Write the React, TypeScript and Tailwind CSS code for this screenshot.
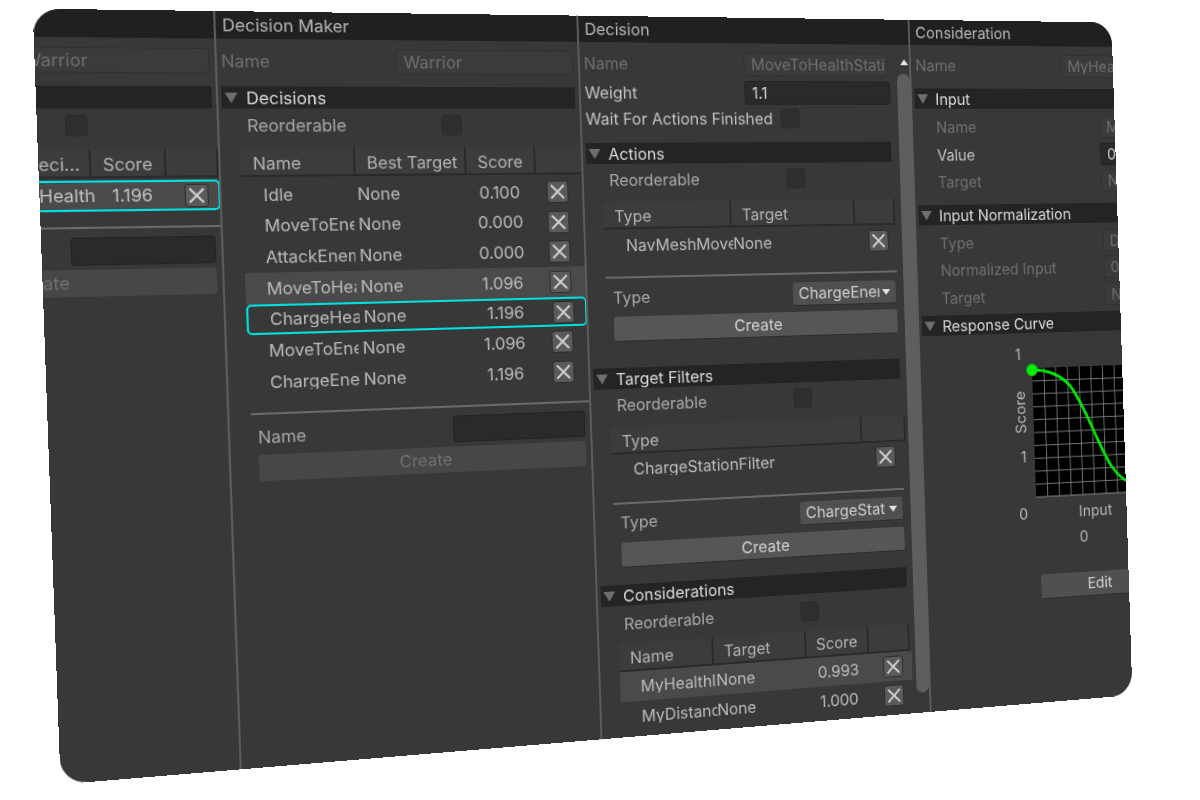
import React from "react";

const W = 1100;
const H = 718;

function quadTransform(): string {
  const [x0, y0, x1, y1, x2, y2, x3, y3] = [32.7, 8.7, 1111.4, 22.4, 1132.3, 695, 60.6, 784.4];
  const sx = x0 - x1 + x2 - x3;
  const sy = y0 - y1 + y2 - y3;
  const dx1 = x1 - x2;
  const dx2 = x3 - x2;
  const dy1 = y1 - y2;
  const dy2 = y3 - y2;
  const det = dx1 * dy2 - dx2 * dy1;
  const g = (sx * dy2 - dx2 * sy) / det;
  const h = (dx1 * sy - sx * dy1) / det;
  const a = x1 - x0 + g * x1;
  const b = x3 - x0 + h * x3;
  const d = y1 - y0 + g * y1;
  const e = y3 - y0 + h * y3;
  return `matrix3d(${a / W},${d / W},0,${g / W},${b / H},${e / H},0,${h / H},0,0,1,0,${x0},${y0},0,1)`;
}

function XBtn() {
  return (
    <div className="w-[22px] h-[22px] rounded-[3px] bg-[#5a5a5a] border border-[#2c2c2c] flex items-center justify-center shrink-0">
      <svg width="16" height="16" viewBox="0 0 16 16">
        <path d="M1.5 1.5 L14.5 14.5 M14.5 1.5 L1.5 14.5" stroke="#d4d4d4" strokeWidth="1.8" />
      </svg>
    </div>
  );
}

function Check() {
  return <div className="w-[20px] h-[20px] rounded-[3px] bg-[#2f2f2f] border border-[#2a2a2a] shrink-0" />;
}

function Tri() {
  return (
    <svg width="12" height="10" viewBox="0 0 12 10" className="ml-[3px] shrink-0">
      <path d="M0 0 H12 L6 10 Z" fill="#6e6e6e" />
    </svg>
  );
}

function Band({ label, cls }: { label: string; cls: string }) {
  return (
    <div className={`h-[21px] bg-[#242424] flex items-center whitespace-nowrap shrink-0 ${cls}`}>
      <Tri />
      <span className="ml-[8px] pt-[2px] text-[#dcdcdc]">{label}</span>
    </div>
  );
}

function Title({ label }: { label: string }) {
  return (
    <div className="h-[26px] bg-[#202020] pl-[8px] flex items-center text-[#b8b8b8] whitespace-nowrap shrink-0">{label}</div>
  );
}

function Input({ text, cls }: { text: string; cls: string }) {
  return (
    <div className={`h-[24px] rounded-[3px] bg-[#3b3b3b] border border-[#313131] pl-[7px] pr-[3px] flex items-center text-[#6f6f6f] shrink-0 ${cls}`}>
      <span className="overflow-hidden whitespace-nowrap">{text}</span>
    </div>
  );
}

function DarkInput({ text, cls }: { text: string; cls: string }) {
  return (
    <div className={`h-[24px] rounded-[3px] bg-[#2a2a2a] border border-[#232323] pl-[7px] flex items-center overflow-hidden whitespace-nowrap text-[#d0d0d0] shrink-0 ${cls}`}>
      {text}
    </div>
  );
}

function CheckRow({ cls }: { cls: string }) {
  return (
    <div className={`h-[24px] flex items-center shrink-0 ${cls}`}>
      <span className="w-[214px] pl-[28px] text-[#a8a8a8]">Reorderable</span>
      <Check />
    </div>
  );
}

function HeadCell({ w, children }: { w: string; children?: React.ReactNode }) {
  return (
    <div className={`h-full border-r-2 border-[#2a2a2a] pt-[3px] flex items-center overflow-hidden whitespace-nowrap text-[#b4b4b4] shrink-0 ${w}`}>
      {children}
    </div>
  );
}

function Line({ cls }: { cls: string }) {
  return <div className={`h-[2px] bg-[#6a6a6a] shrink-0 ${cls}`} />;
}

function ColRule() {
  return <div className="absolute z-10 top-0 bottom-0 right-[-2px] w-[2px] bg-[#5c5c5c]" />;
}

function Dropdown({ text }: { text: string }) {
  return (
    <div className="h-[24px] ml-[189px] w-[112px] rounded-[3px] bg-[#505050] border-b border-[#2c2c2c] flex items-center pl-[6px] pr-[6px] text-[#cfcfcf] shrink-0">
      <span className="overflow-hidden whitespace-nowrap flex-1">{text}</span>
      <svg width="9" height="6" viewBox="0 0 9 6" className="shrink-0 ml-[3px]">
        <path d="M0 0 H9 L4.5 6 Z" fill="#e4e4e4" />
      </svg>
    </div>
  );
}

function TypeRow({ text, cls }: { text: string; cls: string }) {
  return (
    <div className={`h-[24px] flex items-center shrink-0 ${cls}`}>
      <span className="w-0 ml-[28px] mt-[-1px] text-[#a8a8a8]">Type</span>
      <Dropdown text={text} />
    </div>
  );
}

function CreateBtn({ cls }: { cls: string }) {
  return (
    <div className={`h-[25px] ml-[28px] w-[302px] rounded-[3px] bg-[#565656] border-b border-[#2c2c2c] flex items-center justify-center text-[#d2d2d2] shrink-0 ${cls}`}>
      Create
    </div>
  );
}

type DRow = { name: string; score: string; state?: "hover" | "sel" };

const decisionRows: DRow[] = [
  { name: "Idle", score: "0.100" },
  { name: "MoveToEnemy", score: "0.000" },
  { name: "AttackEnemy", score: "0.000" },
  { name: "MoveToHealth", score: "1.096", state: "hover" },
  { name: "ChargeHealth", score: "1.196", state: "sel" },
  { name: "MoveToEnemy", score: "1.096" },
  { name: "ChargeEnemy", score: "1.196" },
];

function rowCls(state?: "hover" | "sel") {
  if (state === "hover") return "bg-[#4a4a4a]";
  if (state === "sel") return "border-2 border-[#00e0e0] rounded-[5px]";
  return "";
}

function BottomFields() {
  return (
    <>
      <Line cls="mt-[14px] ml-[22px] w-[330px]" />
      <div className="mt-[8px] h-[26px] flex items-center shrink-0">
        <span className="w-[215px] pl-[28px] text-[#a8a8a8]">Name</span>
        <div className="w-[132px] h-[26px] rounded-[3px] bg-[#2a2a2a] border border-[#232323]" />
      </div>
      <div className="mt-[4px] ml-[28px] w-[319px] h-[25px] rounded-[3px] bg-[#474747] flex items-center justify-center text-[#707070] shrink-0">
        Create
      </div>
    </>
  );
}

function ColOne() {
  return (
    <div className="relative w-[352px] ml-[-189px] shrink-0 flex flex-col">
      <Title label="Decision Maker" />
      <div className="mt-[9px] h-[24px] flex items-center shrink-0">
        <span className="w-[171px] pl-[6px] text-[#6f6f6f]">Name</span>
        <Input text="Warrior" cls="w-[176px]" />
      </div>
      <Band label="Decisions" cls="mt-[12px] ml-[5px] mr-[4px]" />
      <CheckRow cls="mt-[4px]" />
      <div className="mt-[10px] ml-[21px] w-[331px] h-[27px] flex bg-[#3c3c3c] border-b-2 border-[#2a2a2a] shrink-0">
        <HeadCell w="w-[215px] justify-end pr-[8px]">Deci...</HeadCell>
        <HeadCell w="w-[68px] justify-center">Score</HeadCell>
        <HeadCell w="w-[48px]" />
      </div>
      <div className="mt-[2px] ml-[21px] w-[332px] h-[29px] flex items-center bg-[#4a4a4a] border-2 border-[#00e0e0] rounded-[5px] text-[#c4c4c4] shrink-0">
        <span className="w-[216px] text-right overflow-hidden whitespace-nowrap shrink-0">MoveToHealth</span>
        <span className="w-[67px] text-center shrink-0">1.196</span>
        <div className="w-[45px] pl-[4px] flex justify-center shrink-0"><XBtn /></div>
      </div>
      <BottomFields />
      <ColRule />
    </div>
  );
}

function ColTwo() {
  return (
    <div className="relative w-[352px] shrink-0 flex flex-col">
      <Title label="Decision Maker" />
      <div className="mt-[9px] h-[24px] flex items-center shrink-0">
        <span className="w-[171px] pl-[6px] text-[#6f6f6f]">Name</span>
        <Input text="Warrior" cls="w-[176px]" />
      </div>
      <Band label="Decisions" cls="mt-[12px] ml-[5px] mr-[4px]" />
      <CheckRow cls="mt-[4px]" />
      <div className="mt-[10px] ml-[21px] w-[333px] h-[27px] flex bg-[#3c3c3c] border-b-2 border-[#2a2a2a] shrink-0">
        <HeadCell w="w-[108px] pl-[11px]">Name</HeadCell>
        <HeadCell w="w-[108px] pl-[11px]">Best Target</HeadCell>
        <HeadCell w="w-[69px] justify-center">Score</HeadCell>
        <HeadCell w="w-[48px]" />
      </div>
      <div className="mt-[2px] flex flex-col">
        {decisionRows.map((r, i) => (
          <div key={i} className={`ml-[21px] w-[332px] h-[29.7px] flex items-center text-[#bcbcbc] shrink-0 ${rowCls(r.state)}`}>
            <span className="w-[105px] pl-[20px] overflow-hidden whitespace-nowrap shrink-0">{r.name}</span>
            <span className="w-[105px] ml-[4px] shrink-0">None</span>
            <span className="w-[68px] text-center shrink-0">{r.score}</span>
            <div className="w-[48px] flex justify-center shrink-0"><XBtn /></div>
          </div>
        ))}
      </div>
      <BottomFields />
      <ColRule />
    </div>
  );
}

function ColThree() {
  return (
    <div className="relative w-[352px] shrink-0 flex flex-col">
      <Title label="Decision" />
      <div className="mt-[9px] h-[24px] flex items-center shrink-0">
        <span className="w-[172px] pl-[6px] text-[#6f6f6f]">Name</span>
        <Input text="MoveToHealthStation" cls="w-[156px]" />
      </div>
      <div className="mt-[5px] h-[24px] flex items-center shrink-0">
        <span className="w-[172px] pl-[6px] text-[#c4c4c4]">Weight</span>
        <DarkInput text="1.1" cls="w-[158px]" />
      </div>
      <div className="mt-[2px] h-[24px] flex items-center shrink-0">
        <span className="w-[210px] pl-[6px] text-[#c4c4c4] whitespace-nowrap">Wait For Actions Finished</span>
        <Check />
      </div>

      <Band label="Actions" cls="mt-[12px] ml-[5px] mr-[23px]" />
      <CheckRow cls="mt-[4px]" />
      <div className="mt-[10px] ml-[21px] w-[310px] h-[27px] flex bg-[#3c3c3c] border-b-2 border-[#2a2a2a] shrink-0">
        <HeadCell w="w-[133px] pl-[11px]">Type</HeadCell>
        <HeadCell w="w-[133px] pl-[11px]">Target</HeadCell>
        <HeadCell w="w-[44px]" />
      </div>
      <div className="mt-[1px] ml-[21px] w-[308px] h-[30px] flex items-center text-[#bcbcbc] shrink-0">
        <span className="w-[134px] pl-[22px] overflow-hidden whitespace-nowrap shrink-0">NavMeshMove</span>
        <span className="w-[130px] shrink-0">None</span>
        <div className="w-[44px] pl-[10px] flex justify-center shrink-0"><XBtn /></div>
      </div>
      <Line cls="mt-[16px] ml-[21px] w-[310px]" />
      <TypeRow text="ChargeEnemy" cls="mt-[8px]" />
      <CreateBtn cls="mt-[6px]" />

      <Band label="Target Filters" cls="mt-[26px] ml-[5px] mr-[21px]" />
      <CheckRow cls="mt-[4px]" />
      <div className="mt-[10px] ml-[21px] w-[314px] h-[27px] flex bg-[#3c3c3c] border-b-2 border-[#2a2a2a] shrink-0">
        <HeadCell w="w-[266px] pl-[11px]">Type</HeadCell>
        <HeadCell w="w-[48px]" />
      </div>
      <div className="ml-[21px] w-[308px] h-[30px] flex items-center text-[#bcbcbc] shrink-0">
        <span className="w-[264px] pl-[22px] overflow-hidden whitespace-nowrap shrink-0">ChargeStationFilter</span>
        <div className="w-[44px] pl-[10px] flex justify-center shrink-0"><XBtn /></div>
      </div>
      <Line cls="mt-[18px] ml-[21px] w-[310px]" />
      <TypeRow text="ChargeStationFilter" cls="mt-[7px]" />
      <CreateBtn cls="mt-[7px]" />

      <Band label="Considerations" cls="mt-[17px] ml-[5px] mr-[21px]" />
      <CheckRow cls="mt-[6px]" />
      <div className="mt-[8px] ml-[22px] w-[310px] h-[28px] flex bg-[#3c3c3c] border-b-2 border-[#2a2a2a] shrink-0">
        <HeadCell w="w-[98px] pl-[11px]">Name</HeadCell>
        <HeadCell w="w-[99px] pl-[11px]">Target</HeadCell>
        <HeadCell w="w-[68px] justify-center">Score</HeadCell>
        <HeadCell w="w-[45px]" />
      </div>
      <div className="ml-[22px] w-[312px] h-[30px] flex items-center bg-[#4a4a4a] text-[#bcbcbc] shrink-0">
        <span className="w-[100px] pl-[21px] overflow-hidden whitespace-nowrap shrink-0">MyHealthInput</span>
        <span className="w-[97px] shrink-0">None</span>
        <span className="w-[68px] text-center shrink-0">0.993</span>
        <div className="w-[45px] pl-[6px] flex justify-center shrink-0"><XBtn /></div>
      </div>
      <div className="ml-[22px] w-[312px] h-[30px] flex items-center text-[#bcbcbc] shrink-0">
        <span className="w-[100px] pl-[21px] overflow-hidden whitespace-nowrap shrink-0">MyDistance</span>
        <span className="w-[97px] shrink-0">None</span>
        <span className="w-[68px] text-center shrink-0">1.000</span>
        <div className="w-[45px] pl-[6px] flex justify-center shrink-0"><XBtn /></div>
      </div>

      <div className="absolute right-[-1px] top-[41px] w-[14px] flex justify-center">
        <svg width="9" height="6" viewBox="0 0 9 6">
          <path d="M0 6 H9 L4.5 0 Z" fill="#e8e8e8" />
        </svg>
      </div>
      <div className="absolute right-[0px] top-[56px] h-[641px] w-[14px] rounded-full bg-[#5e5e5e]" />
      <ColRule />
    </div>
  );
}

function SubRow({ label, value, cls, tone }: { label: string; value: string; cls: string; tone?: "value" }) {
  return (
    <div className={`h-[24px] flex items-center shrink-0 ${cls}`}>
      <span className={`w-[215px] pl-[28px] whitespace-nowrap ${tone ? "text-[#c4c4c4]" : "text-[#6f6f6f]"}`}>{label}</span>
      {tone ? <DarkInput text={value} cls="w-[120px]" /> : <Input text={value} cls="w-[120px]" />}
    </div>
  );
}

function Chart() {
  const cells = [13.6, 27.2, 40.8, 54.4, 68, 81.6, 95.2, 108.8, 122.4];
  return (
    <div className="relative mt-[37px] ml-[128px] w-[136px] h-[136px] shrink-0">
      <svg width="136" height="136" viewBox="0 0 136 136" className="overflow-visible">
        <rect x="0" y="0" width="136" height="136" fill="#000000" />
        {cells.map((c) => (
          <path key={c} d={`M${c} 0 V136 M0 ${c} H136`} stroke="#7c7c7c" strokeWidth="1" />
        ))}
        <path d="M0 136 H136" stroke="#8a8a8a" strokeWidth="1" />
        <path d="M0 2 C18 2 34 9 44 21 C56 37 66 62 74 79 C84 101 92 117 108 125 L136 134" fill="none" stroke="#00ea00" strokeWidth="3" />
        <circle cx="0" cy="2" r="6.5" fill="#00ea00" />
      </svg>
      <span className="absolute left-[-19px] top-[-23px] text-[#b4b4b4]">1</span>
      <span className="absolute left-[-37px] top-[38px] -rotate-90 text-[#b4b4b4]">Score</span>
      <span className="absolute left-[-16px] top-[85px] text-[#b4b4b4]">1</span>
      <span className="absolute left-[-20px] top-[145px] text-[#b4b4b4]">0</span>
      <span className="absolute left-[49px] top-[145px] text-[#b4b4b4]">Input</span>
      <span className="absolute left-[49px] top-[172px] text-[#b4b4b4]">0</span>
    </div>
  );
}

function ColFour() {
  return (
    <div className="w-[352px] shrink-0 flex flex-col">
      <Title label="Consideration" />
      <div className="mt-[9px] h-[24px] flex items-center shrink-0">
        <span className="w-[172px] pl-[7px] text-[#6f6f6f]">Name</span>
        <Input text="MyHealthInput" cls="w-[172px]" />
      </div>
      <Band label="Input" cls="mt-[12px] ml-[5px] mr-[5px]" />
      <SubRow label="Name" value="MyHealthInput" cls="mt-[7px]" />
      <SubRow label="Value" value="0.993" tone="value" cls="mt-[5px]" />
      <SubRow label="Target" value="None" cls="mt-[4px]" />
      <Band label="Input Normalization" cls="mt-[12px] ml-[5px] mr-[5px]" />
      <SubRow label="Type" value="Default" cls="mt-[7px]" />
      <SubRow label="Normalized Input" value="0.993" cls="mt-[4px]" />
      <SubRow label="Target" value="None" cls="mt-[5px]" />
      <Band label="Response Curve" cls="mt-[6px] ml-[5px] mr-[5px]" />
      <Chart />
      <div className="mt-[82px] ml-[131px] w-[136px] h-[26px] rounded-[3px] bg-[#505050] border-b border-[#2c2c2c] flex items-center justify-center text-[#d2d2d2] shrink-0">
        Edit
      </div>
    </div>
  );
}

export default function App() {
  return (
    <div className="w-[1200px] h-[800px] overflow-hidden bg-white font-[Inter,sans-serif] text-[16.35px] leading-none">
      <div
        className="w-[1100px] h-[718px] origin-top-left rounded-[24px] overflow-hidden bg-[#383838] flex"
        style={{ transform: quadTransform() }}
      >
        <ColOne />
        <ColTwo />
        <ColThree />
        <ColFour />
      </div>
    </div>
  );
}
